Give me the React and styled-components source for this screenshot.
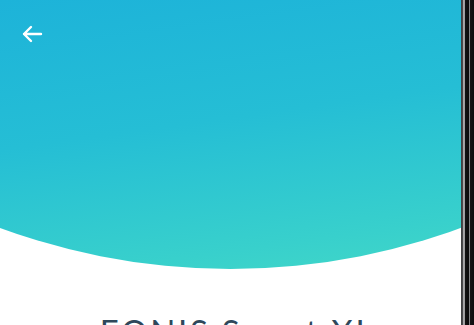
import React from 'react';
import styled, { createGlobalStyle } from 'styled-components';

const GlobalStyle = createGlobalStyle`
    html, body {
        margin: 0;
        padding: 0;
        background: #ffffff;
        overflow: hidden;
    }
    body {
        font-family: Lato, "Noto Sans", sans-serif;
    }
`;

const Device = styled.div`
    display: flex;
    width: 474px;
    height: 325px;
    overflow: hidden;
`;

const Screen = styled.div`
    flex: 1;
    display: flex;
    flex-direction: column;
    background: #ffffff;
`;

const Bezel = styled.div`
    width: 13px;
    flex-shrink: 0;
    background: linear-gradient(
        to right,
        #3c3c3e 0px,
        #4a4a4c 1.5px,
        #a9a9ab 2px,
        #9c9c9e 4px,
        #111112 4.5px,
        #0b0b0c 7.5px,
        #7d7d80 8px,
        #8a8a8c 9px,
        #151516 9.5px,
        #0d0d0e 13px
    );
`;

const Hero = styled.header`
    height: 269px;
    flex-shrink: 0;
    padding: 25px 0 0 21px;
    box-sizing: border-box;
    background: linear-gradient(172deg, #1db3d9 0%, #25bed5 45%, #38d0cc 85%, #41d7c8 100%);
    clip-path: circle(667px at 50% -398px);
`;

const BackButton = styled.button`
    display: block;
    padding: 0;
    border: 0;
    background: none;
    cursor: pointer;
    line-height: 0;
`;

const Title = styled.h1`
    margin: 43px 0 0;
    padding-left: 14px;
    text-align: center;
    font-family: Lato, "Noto Sans", sans-serif;
    font-weight: 400;
    font-size: 33px;
    line-height: 38px;
    letter-spacing: 2.7px;
    color: #2e485b;
    white-space: nowrap;
`;

const BackArrow = () => (
    <svg width="22" height="18" viewBox="0 0 22 18" fill="none">
        <path
            d="M20 9H3M10 2L3 9L10 16"
            stroke="#ffffff"
            strokeWidth="2.4"
            strokeLinecap="round"
            strokeLinejoin="round"
        />
    </svg>
);

export default function App() {
    return (
        <>
            <GlobalStyle />
            <Device>
                <Screen>
                    <Hero>
                        <BackButton aria-label="Back">
                            <BackArrow />
                        </BackButton>
                    </Hero>
                    <Title>EONIS Smart XL</Title>
                </Screen>
                <Bezel />
            </Device>
        </>
    );
}
